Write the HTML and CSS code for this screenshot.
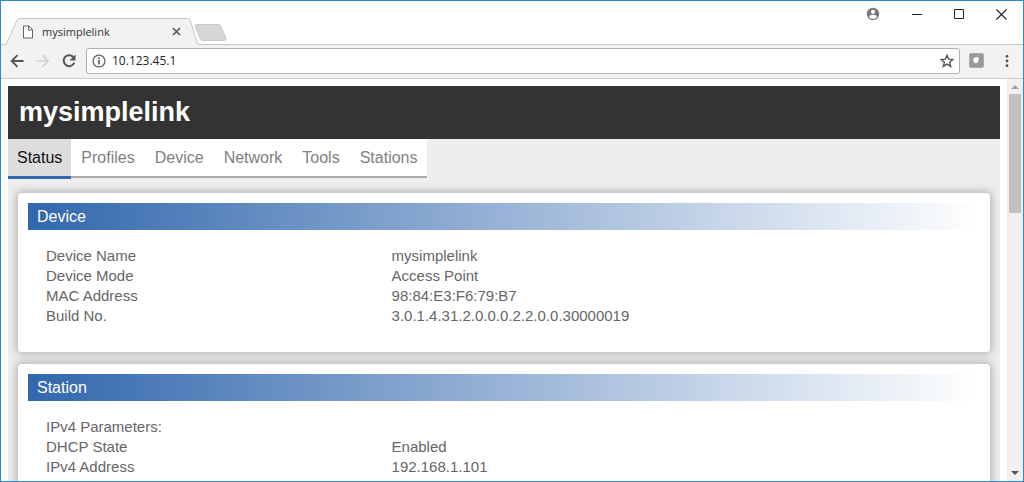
FILE: index.html
```html
<!DOCTYPE html>
<html lang="en">
<head>
<meta charset="utf-8">
<title>mysimplelink</title>
<link rel="stylesheet" href="styles.css">
</head>
<body>
<div class="window">
  <header class="titlebar">
    <div class="tab">
      <svg class="tab-shape" viewBox="0 0 192 27" preserveAspectRatio="none" aria-hidden="true">
        <path d="M0 26.500L11 2Q12 .5 14 .5H180Q183 .5 184 2L192 26.500V27H0Z" fill="#f2f2f2"/>
        <path d="M0 26.500L11 2Q12 .5 14 .5H180Q183 .5 184 2L192 26.500" fill="none" stroke="#c6c6c6"/>
      </svg>
      <svg class="tab-file" viewBox="0 0 12 14" aria-hidden="true">
        <path d="M1.500 1h5.500l3.500 3.500v8.500h-9zM6.500 1v4h4" fill="#fff" stroke="#666"/>
      </svg>
      <span class="tab-title">mysimplelink</span>
      <button class="icon-button tab-close" type="button" aria-label="Close tab">
        <svg width="9" height="9" viewBox="0 0 9 9"><path d="M1 1l7 7M8 1L1 8" stroke="#5a5a5a" stroke-width="1.600"/></svg>
      </button>
    </div>
    <button class="icon-button new-tab" type="button" aria-label="New tab">
      <svg width="33" height="17" viewBox="0 0 33 17"><path d="M3 .5H24Q26 .5 27 2.500L32 14.500Q32 16.500 30 16.500H9Q7 16.500 6 14.500L1 2Q1 .5 3 .5Z" fill="#d6d6d6" stroke="#c8c8c8"/></svg>
    </button>
    <div class="window-controls">
      <button class="icon-button" type="button" aria-label="Profile">
        <svg width="14" height="14" viewBox="0 0 14 14"><circle cx="7" cy="7" r="6.200" fill="#777"/><circle cx="7" cy="4.800" r="2.100" fill="#fff"/><path d="M3 10Q3.500 7.800 7 7.800T11 10Q9.500 12 7 12T3 10Z" fill="#fff"/></svg>
      </button>
      <button class="icon-button" type="button" aria-label="Minimize">
        <svg width="10" height="10" viewBox="0 0 10 10"><path d="M0 5.500H10" stroke="#222"/></svg>
      </button>
      <button class="icon-button" type="button" aria-label="Maximize">
        <svg width="10" height="10" viewBox="0 0 10 10"><path d="M.5 .5h9v9h-9z" fill="none" stroke="#222"/></svg>
      </button>
      <button class="icon-button" type="button" aria-label="Close">
        <svg width="11" height="11" viewBox="0 0 11 11"><path d="M.5 .5l10 10M10.500 .5l-10 10" stroke="#222" stroke-width="1.100"/></svg>
      </button>
    </div>
  </header>

  <div class="toolbar">
    <button class="icon-button" type="button" aria-label="Back">
      <svg width="14" height="14" viewBox="0 0 14 14"><path d="M13.500 7H2M7.500 1.200L1.700 7l5.800 5.800" fill="none" stroke="#555" stroke-width="1.900"/></svg>
    </button>
    <button class="icon-button" type="button" aria-label="Forward" disabled>
      <svg width="14" height="14" viewBox="0 0 14 14"><path d="M.5 7H12M6.500 1.200L12.300 7l-5.800 5.800" fill="none" stroke="#d2d2d2" stroke-width="1.700"/></svg>
    </button>
    <button class="icon-button" type="button" aria-label="Reload">
      <svg width="14" height="14" viewBox="0 0 14 14"><path d="M11.600 3.400A5.500 5.500 0 1 0 12.300 8.700" fill="none" stroke="#555" stroke-width="2"/><path d="M13.500 .5V6.500H7.500Z" fill="#555"/></svg>
    </button>
    <div class="address">
      <svg width="14" height="14" viewBox="0 0 14 14" aria-hidden="true"><circle cx="7" cy="7" r="5.900" fill="none" stroke="#666" stroke-width="1.300"/><path d="M7 6v4.500M7 3.300v1.600" stroke="#555" stroke-width="1.600"/></svg>
      <input class="address-input" type="text" value="10.123.45.1" aria-label="Address">
      <button class="icon-button" type="button" aria-label="Bookmark this page">
        <svg width="14" height="14" viewBox="0 0 14 14"><path d="M7 1.300L8.600 5.200 12.900 5.500 9.600 8.200 10.700 12.400 7 10.100 3.300 12.400 4.400 8.200 1.100 5.500 5.400 5.200Z" fill="none" stroke="#555" stroke-width="1.400"/></svg>
      </button>
    </div>
    <button class="icon-button extension" type="button" aria-label="Extension">
      <svg width="15" height="15" viewBox="0 0 15 15"><rect x=".5" y=".5" width="14" height="14" rx="1.500" fill="#999" stroke="#aaa"/><path d="M4.500 5.500Q7 3 9.800 4.500 10 9 7 10.500 4 10 4.500 5.500Z" fill="#fff"/></svg>
    </button>
    <button class="icon-button menu" type="button" aria-label="Menu">
      <svg width="4" height="14" viewBox="0 0 4 14"><g fill="#555"><circle cx="2" cy="2.300" r="1.400"/><circle cx="2" cy="7" r="1.400"/><circle cx="2" cy="11.700" r="1.400"/></g></svg>
    </button>
  </div>

  <div class="viewport">
    <main class="page">
      <h1 class="page-title">mysimplelink</h1>
      <nav class="nav">
        <a class="nav-link nav-link-active" href="#status" aria-current="page">Status</a>
        <a class="nav-link" href="#profiles">Profiles</a>
        <a class="nav-link" href="#device">Device</a>
        <a class="nav-link" href="#network">Network</a>
        <a class="nav-link" href="#tools">Tools</a>
        <a class="nav-link" href="#stations">Stations</a>
      </nav>
      <div class="panels">
        <section class="panel">
          <h2 class="panel-title">Device</h2>
          <table class="details">
            <tr><th scope="row">Device Name</th><td>mysimplelink</td></tr>
            <tr><th scope="row">Device Mode</th><td>Access Point</td></tr>
            <tr><th scope="row">MAC Address</th><td>98:84:E3:F6:79:B7</td></tr>
            <tr><th scope="row">Build No.</th><td>3.0.1.4.31.2.0.0.0.2.2.0.0.30000019</td></tr>
          </table>
        </section>
        <section class="panel">
          <h2 class="panel-title">Station</h2>
          <table class="details">
            <tr><th scope="row">IPv4 Parameters:</th><td></td></tr>
            <tr><th scope="row">DHCP State</th><td>Enabled</td></tr>
            <tr><th scope="row">IPv4 Address</th><td>192.168.1.101</td></tr>
          </table>
        </section>
      </div>
    </main>
    <div class="scrollbar" aria-hidden="true">
      <svg width="8" height="4" viewBox="0 0 8 4"><path d="M0 4L4 0 8 4Z" fill="#a3a3a3"/></svg>
      <div class="scroll-track"><div class="scroll-thumb"></div></div>
      <svg width="8" height="4" viewBox="0 0 8 4"><path d="M0 0L4 4 8 0Z" fill="#505050"/></svg>
    </div>
  </div>
</div>
</body>
</html>
```
FILE: styles.css
```css
* {
  box-sizing: border-box;
}

body {
  margin: 0;
  font-family: "Liberation Sans", Arial, sans-serif;
}

.window {
  display: flex;
  flex-direction: column;
  height: 100vh;
  overflow: hidden;
  border: 1px solid #2b88d8;
  background: #fff;
}

.icon-button {
  display: flex;
  padding: 0;
  border: 0;
  background: none;
}

.titlebar {
  display: flex;
  align-items: flex-end;
  padding-left: 5px;
  height: 44px;
  border-bottom: 1px solid #c6c6c6;
}

.tab {
  position: relative;
  display: flex;
  align-items: center;
  width: 192px;
  height: 27px;
  margin-bottom: -1px;
  padding: 0 17px 0 16px;
  font: 11px "Open Sans", sans-serif;
  color: #333;
}

.tab-shape {
  position: absolute;
  inset: 0;
  width: 100%;
  height: 100%;
}

.tab-file,
.tab-title,
.tab-close {
  position: relative;
}

.tab-file {
  width: 12px;
  height: 14px;
  margin-right: 8px;
}

.tab-title {
  flex: 1;
}

.new-tab {
  margin: 0 0 3px -4px;
}

.window-controls {
  display: flex;
  align-items: center;
  align-self: flex-start;
  gap: 32px;
  height: 26px;
  margin-left: auto;
  padding-right: 16px;
}

.toolbar {
  display: flex;
  align-items: center;
  gap: 12px;
  height: 34px;
  padding: 0 14px 2px 9px;
  border-bottom: 1px solid #c9c9c9;
  background: #f2f2f2;
}

.address {
  display: flex;
  flex: 1;
  align-items: center;
  height: 26px;
  margin-left: -2px;
  padding: 0 5px;
  border: 1px solid #b0b0b0;
  border-radius: 3px;
  background: #fff;
}

.address-input {
  flex: 1;
  min-width: 0;
  padding: 0 6px;
  border: 0;
  outline: 0;
  background: none;
  font: 12px "Open Sans", sans-serif;
  color: #222;
}

.extension {
  margin-left: -3px;
}

.menu {
  margin-left: 9px;
}

.viewport {
  display: flex;
  flex: 1;
  min-height: 0;
}

.page {
  flex: 1;
  margin: 7px 7px 0;
  overflow: hidden;
  background: #eee;
}

.page-title {
  margin: 0;
  padding: 0 11px;
  background: #333;
  color: #fff;
  font-size: 27px;
  line-height: 53px;
}

.nav {
  display: flex;
  align-items: flex-start;
  height: 41px;
}

.nav-link {
  padding: 0 10px;
  border-bottom: 2px solid #aaa;
  background: #fff;
  color: #808080;
  font-size: 16px;
  line-height: 37px;
  text-decoration: none;
}

.nav-link-active {
  padding: 0 9px;
  border-bottom: 3px solid #3167b1;
  background: #ddd;
  color: #111;
}

.panels {
  display: flex;
  flex-direction: column;
  gap: 10px;
  padding: 12px 9px;
}

.panel {
  padding: 10px 10px 26px;
  border: 1px solid #ccc;
  border-radius: 4px;
  background: #fff;
  box-shadow: 0 0 10px rgba(0, 0, 0, 0.3);
}

.panel-title {
  margin: 0 0 16px;
  padding: 0 9px;
  background: linear-gradient(to right, #3167ad, #fff);
  color: #fff;
  font-size: 16px;
  font-weight: 400;
  line-height: 27px;
}

.details {
  width: 100%;
  padding-left: 18px;
  border-spacing: 0;
  color: #666;
  font-size: 15px;
  line-height: 20px;
  text-align: left;
}

.details th {
  width: 37%;
  padding: 0;
  font-weight: 400;
}

.details td {
  padding: 0;
}

.scrollbar {
  display: flex;
  flex-direction: column;
  align-items: center;
  gap: 5px;
  width: 16px;
  padding: 6px 2px;
  background: #f0f0f0;
}

.scroll-track {
  flex: 1;
  width: 100%;
}

.scroll-thumb {
  height: 32%;
  background: #c1c1c1;
}
```
